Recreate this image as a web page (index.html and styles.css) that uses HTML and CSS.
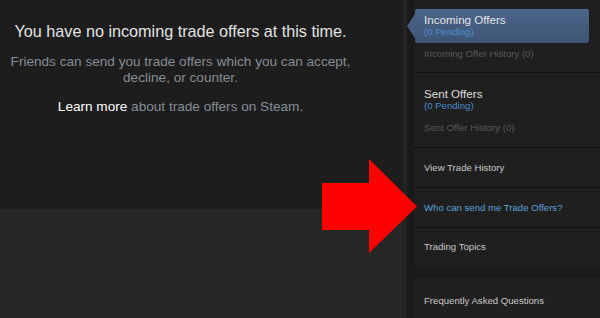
FILE: index.html
```html
<!DOCTYPE html>
<html>
<head>
<meta charset="utf-8">
<link rel="stylesheet" href="styles.css">
</head>
<body>
<div class="page">
  <div class="main">
    <div class="main-top">
      <div class="empty">
        <h1 class="empty-title">You have no incoming trade offers at this time.</h1>
        <p class="empty-sub">Friends can send you trade offers which you can accept, decline, or counter.</p>
        <p class="empty-learn"><span class="learn-link">Learn more</span> about trade offers on Steam.</p>
      </div>
    </div>
    <div class="main-bottom"></div>
  </div>
  <div class="divider"></div>
  <div class="rightcol">
    <div class="panel">
      <div class="section section-incoming">
        <div class="tab active">
          <div class="tab-title">Incoming Offers</div>
          <div class="tab-pending">(0 Pending)</div>
        </div>
        <div class="history">Incoming Offer History (0)</div>
      </div>
      <div class="section section-sent">
        <div class="tab">
          <div class="tab-title">Sent Offers</div>
          <div class="tab-pending">(0 Pending)</div>
        </div>
        <div class="history">Sent Offer History (0)</div>
      </div>
      <div class="row">View Trade History</div>
      <div class="row row-link">Who can send me Trade Offers?</div>
      <div class="row row-last">Trading Topics</div>
    </div>
    <div class="panel panel-faq">
      <div class="row row-faq">Frequently Asked Questions</div>
    </div>
  </div>
</div>
<svg class="red-arrow" width="96" height="95" viewBox="0 0 96 95">
  <polygon points="0,24 47,24 47,0 95,47.5 47,94 47,71 0,71" fill="#ff0000"/>
</svg>
</body>
</html>
```
FILE: styles.css
```css
html, body {
  margin: 0;
  padding: 0;
  background: #1d1d1d;
  font-family: "Liberation Sans", Arial, sans-serif;
}

.page {
  display: flex;
  width: 600px;
  height: 318px;
  overflow: hidden;
}

.main {
  width: 403px;
  display: flex;
  flex-direction: column;
}

.main-top {
  height: 209px;
  background: #1d1d1d;
}

.main-bottom {
  flex: 1;
  background: #262626;
}

.empty {
  width: 361px;
  padding-top: 21px;
  text-align: center;
}

.empty-title {
  margin: 0;
  font-size: 16.2px;
  line-height: 20px;
  font-weight: normal;
  color: #e2e2e2;
}

.empty-sub {
  margin: 13px 0 0;
  font-size: 13.6px;
  line-height: 16px;
  color: #858d96;
}

.empty-learn {
  margin: 13px 0 0;
  font-size: 13.6px;
  line-height: 16px;
  color: #858d96;
}

.learn-link {
  color: #ffffff;
}

.divider {
  width: 4px;
  background: #242424;
}

.rightcol {
  flex: 1;
  background: #1a1a1a;
  padding-left: 7px;
  display: flex;
  flex-direction: column;
}

.panel {
  background: #1f1f1f;
}

.section {
  border-bottom: 1px solid #131313;
}

.section-incoming {
  height: 73px;
  padding-top: 9px;
  box-sizing: border-box;
}

.tab {
  padding: 0 9px 0 10px;
}

.tab.active {
  position: relative;
  margin: 0 11px 0 1px;
  height: 34px;
  box-sizing: border-box;
  padding: 4px 9px 5px 9px;
  border-radius: 2px;
  background: linear-gradient(to bottom, #4b6589 0%, #3d5475 100%);
}

.tab.active::before {
  content: "";
  position: absolute;
  left: -8px;
  top: 5px;
  border-style: solid;
  border-width: 12px 8px 12px 0;
  border-color: transparent #455e81 transparent transparent;
}

.tab-title {
  font-size: 11.6px;
  line-height: 13px;
  color: #e4e4e4;
}

.tab-pending {
  font-size: 9.6px;
  line-height: 12px;
  color: #4f91d3;
}

.history {
  margin-top: 5px;
  padding-left: 10px;
  font-size: 9.6px;
  line-height: 12px;
  color: #595959;
}

.section-sent {
  height: 75px;
  box-sizing: border-box;
  padding-top: 14px;
  border-bottom: 1px solid #0c0c0c;
}

.section-sent .tab-title {
  color: #dedede;
}

.section-sent .tab-pending {
  color: #4a88c8;
}

.section-sent .history {
  margin-top: 10px;
}

.row {
  height: 40px;
  box-sizing: border-box;
  padding-left: 10px;
  font-size: 9.6px;
  line-height: 40px;
  color: #c8c8c8;
  border-bottom: 1px solid #141414;
}

.row-link {
  color: #5aa2da;
}

.row-last {
  border-bottom: none;
  line-height: 38px;
}

.panel-faq {
  margin-top: 10px;
  flex: 1;
  background: #202020;
}

.row-faq {
  border-bottom: none;
  line-height: 45px;
  height: auto;
}

.red-arrow {
  position: absolute;
  left: 322px;
  top: 159px;
}
```
